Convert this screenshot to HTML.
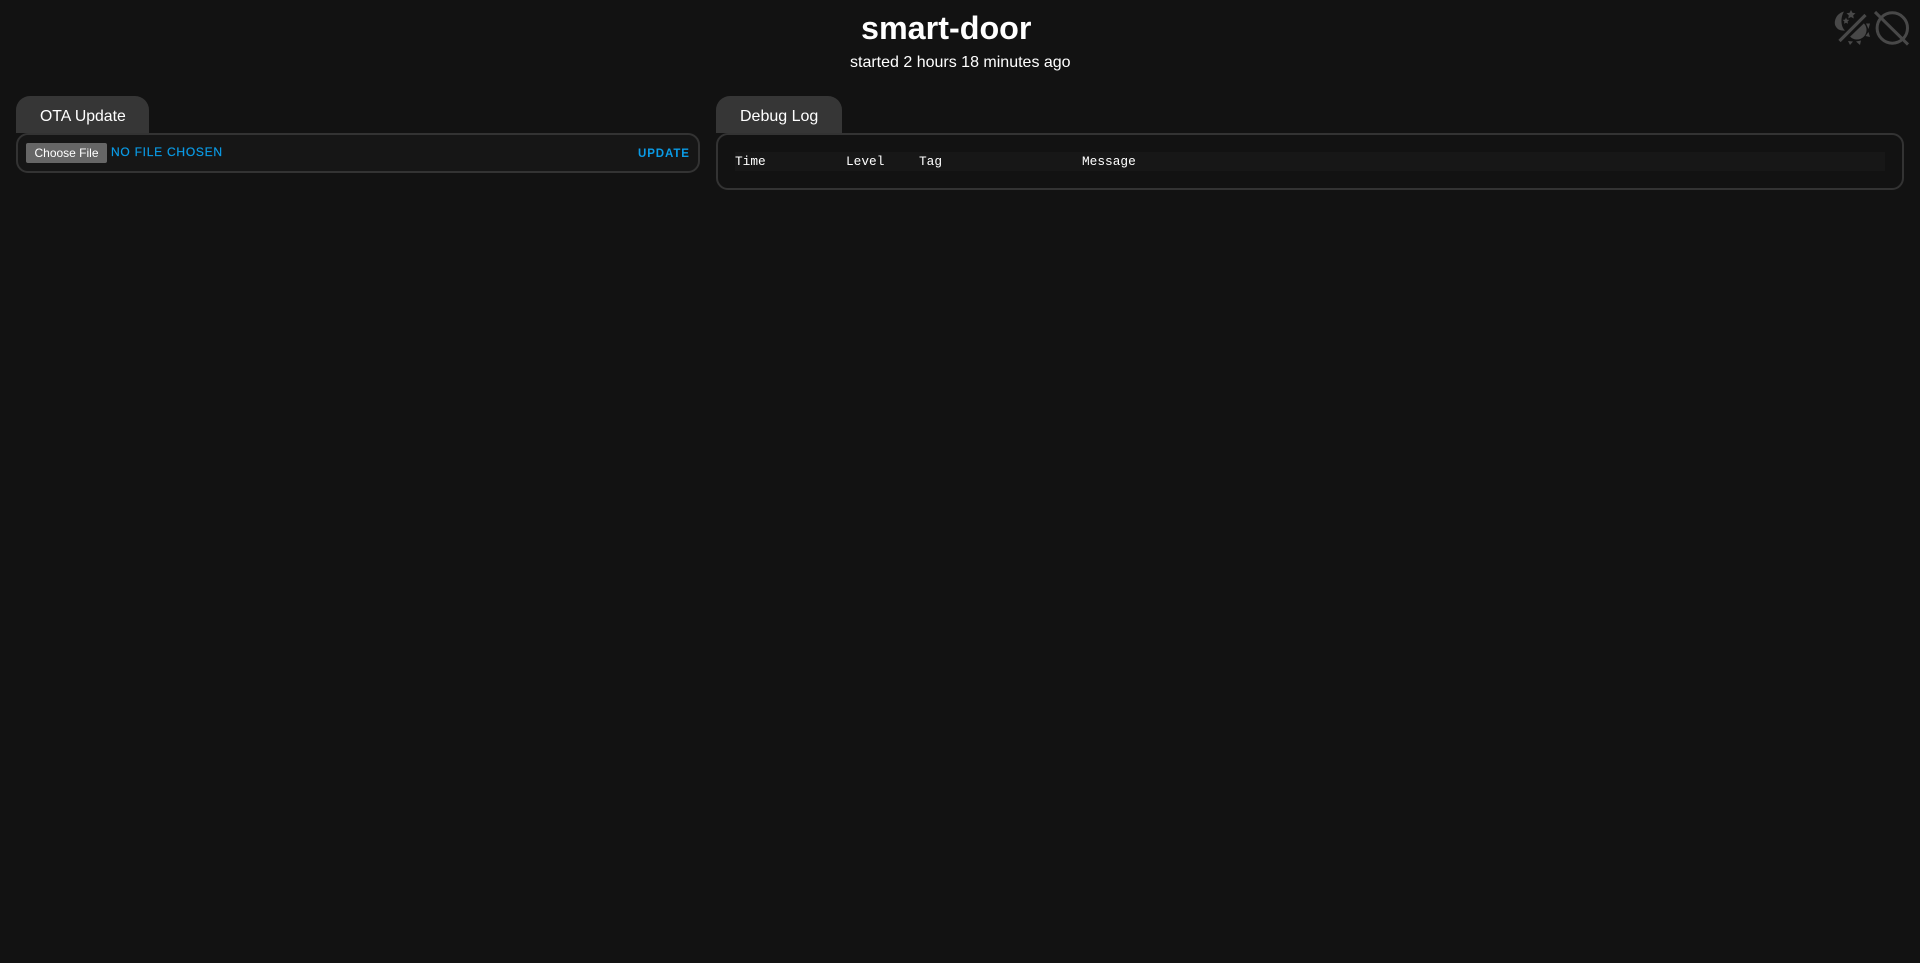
<!DOCTYPE html>
<html>
<head>
<meta charset="utf-8">
<style>
html,body{margin:0;padding:0;width:1920px;height:963px;overflow:hidden;background:#121212;color:#fff;font-family:"Liberation Sans",sans-serif}
.a{position:absolute;white-space:nowrap}
.panel{position:absolute;box-sizing:border-box;background:#161616;border:2px solid #333;border-radius:12px}
.tab{position:absolute;background:#363636;border-radius:14px 14px 0 0;top:96px;height:37px}
.mono{font-family:"Liberation Mono",monospace;font-size:12.8px;line-height:14px;top:155px;color:#fff}
.blue{color:#0a9be6;font-weight:400;letter-spacing:.75px;font-size:12px;line-height:14px;-webkit-text-stroke:.2px #0a9be6}
</style>
</head>
<body>
<div class="a" style="left:861px;top:9px;font-size:32.300px;line-height:38px;font-weight:700">smart-door</div>
<div class="a" style="left:850px;top:53px;font-size:16px;line-height:20px;width:220px;text-align:center">started 2 hours 18 minutes ago</div>

<svg class="a" style="left:1830px;top:5px" width="85" height="45" viewBox="1830 5 85 45">
  <g fill="#484848">
    <path d="M1844 11.500 C1836 13.500 1833.500 21.500 1835.500 26 C1837.500 30 1841.500 31 1845 30.500 C1841 27 1840 18 1844 11.500Z"/>
    <path d="M1851 10 L1852.400 12.800 L1855.500 13.200 L1853.200 15.400 L1853.800 18.500 L1851 17 L1848.200 18.500 L1848.800 15.400 L1846.500 13.200 L1849.600 12.800Z"/>
    <path d="M1846 17.500 L1847 19.600 L1849.300 19.900 L1847.600 21.500 L1848 23.800 L1846 22.700 L1844 23.800 L1844.400 21.500 L1842.700 19.900 L1845 19.600Z"/>
    <path d="M1863.900 23.400 A9.500 9.500 0 0 1 1850.100 36.600Z"/>
    <path d="M1866 23.500 L1870 23.500 L1868.500 29Z"/>
    <path d="M1868.500 32 L1870 37 L1865.500 36Z"/>
    <path d="M1848 41 L1853 41.500 L1850 45Z"/>
    <path d="M1856 41.500 L1861 40.500 L1860 45Z"/>
  </g>
  <path d="M1865.500 15 L1839.500 41" stroke="#484848" stroke-width="3.200" fill="none"/>
  <circle cx="1892.300" cy="28" r="15.200" fill="none" stroke="#484848" stroke-width="3"/>
  <path d="M1875 12 L1908 44.500" stroke="#484848" stroke-width="3" fill="none"/>
</svg>

<div class="tab" style="left:16px;width:133px"></div>
<div class="a" style="left:40px;top:107px;font-size:15.800px;line-height:20px">OTA Update</div>
<div class="panel" style="left:16px;top:133px;width:684px;height:40px"></div>
<div class="a" style="left:26px;top:143px;width:81px;height:20px;background:#666;border-radius:2px;color:#fff;font-size:12px;line-height:20px;text-align:center">Choose File</div>
<div class="a blue" style="left:111px;top:145px">NO FILE CHOSEN</div>
<div class="a blue" style="left:638px;top:147px;font-weight:700;font-size:11.500px;letter-spacing:.9px;-webkit-text-stroke:0">UPDATE</div>

<div class="tab" style="left:716px;width:126px"></div>
<div class="a" style="left:740px;top:107px;font-size:16px;line-height:20px">Debug Log</div>
<div class="panel" style="left:716px;top:133px;width:1188px;height:57px;background:#121212"></div>
<div class="a" style="left:735px;top:152px;width:1150px;height:19px;background:#171717"></div>
<div class="a mono" style="left:735px">Time</div>
<div class="a mono" style="left:846px">Level</div>
<div class="a mono" style="left:919px">Tag</div>
<div class="a mono" style="left:1082px">Message</div>
</body>
</html>
